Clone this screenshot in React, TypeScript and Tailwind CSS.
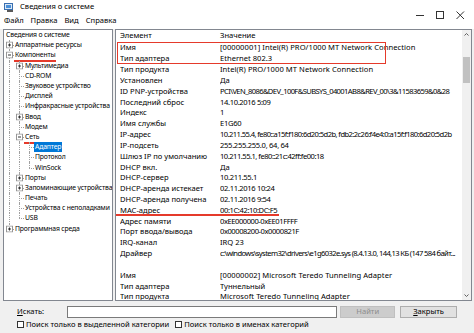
import React from "react";

type TreeItem = { level: number; label: string; exp?: "+" | "-"; last?: boolean; selected?: boolean; mark?: boolean };

const TREE: TreeItem[] = [
  { level: 0, label: "Сведения о системе" },
  { level: 1, label: "Аппаратные ресурсы", exp: "+" },
  { level: 1, label: "Компоненты", exp: "-", mark: true },
  { level: 2, label: "Мультимедиа", exp: "+" },
  { level: 2, label: "CD-ROM" },
  { level: 2, label: "Звуковое устройство" },
  { level: 2, label: "Дисплей" },
  { level: 2, label: "Инфракрасные устройства" },
  { level: 2, label: "Ввод", exp: "+" },
  { level: 2, label: "Модем" },
  { level: 2, label: "Сеть", exp: "-", mark: true },
  { level: 3, label: "Адаптер", selected: true },
  { level: 3, label: "Протокол" },
  { level: 3, label: "WinSock", last: true },
  { level: 2, label: "Порты", exp: "+" },
  { level: 2, label: "Запоминающие устройства", exp: "+" },
  { level: 2, label: "Печать" },
  { level: 2, label: "Устройства с неполадками" },
  { level: 2, label: "USB", last: true },
  { level: 1, label: "Программная среда", exp: "+", last: true },
];

// [элемент, значение, трекинг значения]
const ROWS: [string, string, string][] = [
  ["Имя", "[00000001] Intel(R) PRO/1000 MT Network Connection", "tracking-[0.05px]"],
  ["Тип адаптера", "Ethernet 802.3", ""],
  ["Тип продукта", "Intel(R) PRO/1000 MT Network Connection", "tracking-[0.05px]"],
  ["Установлен", "Да", ""],
  ["ID PNP-устройства", "PCI\\VEN_8086&DEV_100F&SUBSYS_04001AB8&REV_00\\3&11583659&0&28", "tracking-[-0.6px]"],
  ["Последний сброс", "14.10.2016 5:09", "tracking-[-0.35px]"],
  ["Индекс", "1", ""],
  ["Имя службы", "E1G60", "tracking-[-0.3px]"],
  ["IP-адрес", "10.211.55.4, fe80::a15f:f180:6d20:5d2b, fdb2:2c26:f4e4:0:a15f:f180:6d20:5d2b", "tracking-[-0.58px]"],
  ["IP-подсеть", "255.255.255.0, 64, 64", "tracking-[-0.3px]"],
  ["Шлюз IP по умолчанию", "10.211.55.1, fe80::21c:42ff:fe00:18", "tracking-[-0.5px]"],
  ["DHCP вкл.", "Да", ""],
  ["DHCP-сервер", "10.211.55.1", "tracking-[-0.35px]"],
  ["DHCP-аренда истекает", "02.11.2016 10:24", "tracking-[-0.35px]"],
  ["DHCP-аренда получена", "02.11.2016 9:54", "tracking-[-0.35px]"],
  ["MAC-адрес", "00:1C:42:10:DC:F5", "tracking-[-0.4px]"],
  ["Адрес памяти", "0xEE000000-0xEE01FFFF", "tracking-[-0.45px]"],
  ["Порт ввода/вывода", "0x00008200-0x0000821F", "tracking-[-0.45px]"],
  ["IRQ-канал", "IRQ 23", ""],
  ["Драйвер", "c:\\windows\\system32\\drivers\\e1g6032e.sys (8.4.13.0, 144,13 КБ (147 584 байт...", "tracking-[-0.62px]"],
  ["", "", ""],
  ["Имя", "[00000002] Microsoft Teredo Tunneling Adapter", "tracking-[0.05px]"],
  ["Тип адаптера", "Туннельный", ""],
  ["Тип продукта", "Microsoft Teredo Tunneling Adapter", "tracking-[0.05px]"],
];

function Expander({ sign }: { sign: "+" | "-" }) {
  return (
    <svg width="7" height="7" viewBox="0 0 7 7" className="absolute left-[2px] top-1/2 -translate-y-1/2">
      <rect x="0.5" y="0.5" width="6" height="6" fill="white" stroke="#969696" />
      <line x1="2" y1="3.5" x2="5" y2="3.5" stroke="#333" />
      {sign === "+" && <line x1="3.5" y1="2" x2="3.5" y2="5" stroke="#333" />}
    </svg>
  );
}

function Tree() {
  const open: boolean[] = [];
  return (
    <div className="flex flex-col text-[6.8px] tracking-[-0.15px]">
      {TREE.map((it, i) => {
        open[it.level] = !it.last;
        const cells = [];
        for (let k = 0; k < it.level; k++) {
          const isOwn = k === it.level - 1;
          const cont = isOwn ? !it.last : open[k + 1];
          cells.push(
            <div key={k} className="relative w-[10px] shrink-0 self-stretch">
              {(cont || isOwn) && (
                <div
                  className={`absolute left-[5px] top-0 border-l border-dotted border-[#a0a0a0] ${
                    cont ? "h-full" : "h-1/2"
                  }`}
                />
              )}
              {isOwn && (
                <div className="absolute left-[5px] top-1/2 w-[5px] border-t border-dotted border-[#a0a0a0]" />
              )}
              {isOwn && it.exp && <Expander sign={it.exp} />}
            </div>
          );
        }
        return (
          <div key={i} className="flex h-[10.2px] items-stretch whitespace-nowrap">
            {cells}
            <div className="flex shrink-0 items-center">
              <span
                className={`relative px-[1px] leading-[10px] ${
                  it.level === 0 ? "ml-[1px]" : ""
                } ${it.selected ? "bg-[#0078d7] text-white" : ""}`}
              >
                {it.label}
                {it.mark && <span className="absolute -bottom-[2px] left-0 right-0 h-[2px] bg-[#e53a2b]" />}
              </span>
            </div>
          </div>
        );
      })}
    </div>
  );
}

function Chevron({ up }: { up?: boolean }) {
  return (
    <svg width="9" height="9" viewBox="0 0 9 9">
      <path d={up ? "M2.5 5.5 L4.5 3.5 L6.5 5.5" : "M2.5 3.5 L4.5 5.5 L6.5 3.5"} fill="none" stroke="#606060" strokeWidth="1" />
    </svg>
  );
}

export default function App() {
  return (
    <div
      className="flex h-[333px] w-[474px] flex-col overflow-hidden bg-[#f0f0f0] text-[7.6px] text-black"
      style={{ fontFamily: '"Noto Sans", "Open Sans", sans-serif' }}
    >
      <div className="flex h-[29px] shrink-0 bg-white">
        <div className="flex flex-1 flex-col">
          <div className="flex h-[14px] items-center gap-[6px] pl-[4px]">
            <svg width="10" height="9" viewBox="0 0 10 9">
              <rect x="0.5" y="0.5" width="8" height="6" fill="#dbe8f5" stroke="#3a6fb0" />
              <rect x="2" y="2" width="5" height="3" fill="#4a90d9" />
              <rect x="3" y="7" width="6" height="2" fill="#5a5a5a" />
            </svg>
            <span>Сведения о системе</span>
          </div>
          <div className="flex h-[14px] items-center gap-[7px] pl-[4px]">
            <span>Файл</span>
            <span>Правка</span>
            <span>Вид</span>
            <span>Справка</span>
          </div>
        </div>
        <div className="flex items-center gap-[11px] pr-[9px] pt-[2px]">
          <svg width="9" height="9" viewBox="0 0 9 9">
            <line x1="0" y1="4.5" x2="8" y2="4.5" stroke="#333" />
          </svg>
          <svg width="9" height="9" viewBox="0 0 9 9">
            <rect x="0.5" y="0.5" width="7" height="7" fill="none" stroke="#333" />
          </svg>
          <svg width="9" height="9" viewBox="0 0 9 9">
            <path d="M0.5 0.5 L8 8 M8 0.5 L0.5 8" stroke="#333" />
          </svg>
        </div>
      </div>

      <div className="flex h-[272px] shrink-0 gap-[2px] pl-[3px] pr-[2px]">
        <div className="w-[110px] overflow-hidden border border-[#828790] bg-white">
          <Tree />
        </div>
        <div className="relative flex flex-1 overflow-hidden border border-[#828790] bg-white">
          <div className="relative flex-1 overflow-hidden">
            <div className="grid h-[12px] grid-cols-[100px_1fr] items-center pl-[4px]">
              <span>Элемент</span>
              <span>Значение</span>
            </div>
            {ROWS.map(([k, v, tr], i) => (
              <div
                key={i}
                className="relative grid h-[10.83px] grid-cols-[100px_1fr] items-center whitespace-nowrap pl-[4px] leading-[10px]"
              >
                <span className="overflow-hidden">{k}</span>
                <span className={`overflow-hidden ${tr}`}>{v}</span>
                {i === 15 && <div className="absolute -bottom-[1px] left-0 h-[2px] w-[163px] bg-[#e53a2b]" />}
              </div>
            ))}
            <div className="absolute left-[1px] top-[11.5px] h-[22px] w-[269px] border-[1.5px] border-[#e53a2b]" />
          </div>
          <div className="flex w-[9px] flex-col items-center bg-[#f0f0f0]">
            <div className="flex h-[9px] items-center justify-center">
              <Chevron up />
            </div>
            <div className="mt-[18px] h-[26px] w-[7px] bg-[#c1c1c1]" />
            <div className="flex-1" />
            <div className="flex h-[9px] items-center justify-center">
              <Chevron />
            </div>
          </div>
        </div>
      </div>

      <div className="flex flex-1 flex-col pl-[17px] pr-[17px] pt-[5px]">
        <div className="flex h-[12px] items-center">
          <span className="w-[50px]">
            <span className="underline">И</span>скать:
          </span>
          <div className="h-[12px] w-[271px] border border-[#7a7a7a] bg-white" />
          <div className="ml-[3px] flex h-[12px] w-[55px] items-center justify-center border border-[#bfbfbf] bg-[#cccccc] text-[#8c8c8c]">
            Найти
          </div>
          <div className="ml-[5px] flex h-[12px] w-[57px] items-center justify-center border border-[#adadad] bg-[#e1e1e1]">
            <span>
              <span className="underline">З</span>акрыть
            </span>
          </div>
        </div>
        <div className="mt-[1px] flex h-[12px] items-center">
          <div className="flex items-center gap-[2px]">
            <div className="h-[7px] w-[7px] border border-[#333] bg-white" />
            <span>Поиск только в выделенной категории</span>
          </div>
          <div className="ml-[6px] flex items-center gap-[2px]">
            <div className="h-[7px] w-[7px] border border-[#333] bg-white" />
            <span>Поиск только в именах категорий</span>
          </div>
        </div>
      </div>
    </div>
  );
}
